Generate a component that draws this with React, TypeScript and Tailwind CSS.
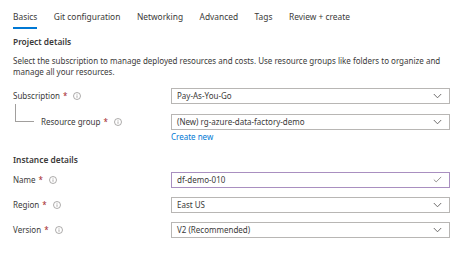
import { ReactNode } from "react";

const tabs = ["Basics", "Git configuration", "Networking", "Advanced", "Tags", "Review + create"];

function Info() {
  return (
    <svg width="8" height="8" viewBox="0 0 8 8" className="ml-[6px] shrink-0">
      <circle cx="4" cy="4" r="3.5" fill="none" stroke="#8a8886" strokeWidth="0.7" />
      <line x1="4" y1="3.4" x2="4" y2="5.8" stroke="#8a8886" strokeWidth="0.7" />
      <circle cx="4" cy="2.3" r="0.45" fill="#8a8886" />
    </svg>
  );
}

function Chevron() {
  return (
    <svg width="9" height="6" viewBox="0 0 9 6">
      <path d="M0.8 1 L4.5 4.8 L8.2 1" fill="none" stroke="#605e5c" strokeWidth="0.9" />
    </svg>
  );
}

function Check() {
  return (
    <svg width="9" height="7" viewBox="0 0 9 7">
      <path d="M0.8 3.6 L3.2 5.9 L8.2 0.9" fill="none" stroke="#8a8886" strokeWidth="0.9" />
    </svg>
  );
}

function Label({ children }: { children: ReactNode }) {
  return (
    <span className="flex items-center">
      {children}
      <span className="ml-[3px] text-[#a4262c]">*</span>
      <Info />
    </span>
  );
}

function Field({ value, valid }: { value: string; valid?: boolean }) {
  return (
    <div
      className={`flex h-[16px] w-[279px] items-center justify-between border px-[5px] ${
        valid ? "border-[#a98fc0]" : "border-[#b8b6b4]"
      }`}
    >
      <span>{value}</span>
      <span className="pr-[2px]">{valid ? <Check /> : <Chevron />}</span>
    </div>
  );
}

export default function App() {
  return (
    <div className="h-[253px] w-[474px] overflow-hidden bg-white text-[8px] leading-none text-[#3b3a39] [font-family:'Noto_Sans',sans-serif]">
      <div className="flex gap-[16.5px] px-[13px] pt-[13px] text-[8.4px]">
        {tabs.map((t, i) => (
          <div key={t} className="flex flex-col">
            <span className="h-[12px]">{t}</span>
            <span className={`mt-[2px] h-[2px] ${i === 0 ? "bg-[#0078d4]" : ""}`} />
          </div>
        ))}
      </div>

      <div className="px-[13px]">
        <h2 className="mt-[9px] text-[8.4px] font-semibold">Project details</h2>
        <p className="mt-[9px] w-[445px] leading-[11px]">
          Select the subscription to manage deployed resources and costs. Use resource groups like folders to organize
          and manage all your resources.
        </p>

        <div className="mt-[11px] flex items-center justify-between pr-[11px]">
          <Label>Subscription</Label>
          <Field value="Pay-As-You-Go" />
        </div>
        <div className="mt-[10px] flex items-start justify-between pr-[11px]">
          <div className="flex items-start">
            <span className="-mt-[10px] ml-[2px] h-[18px] w-[19px] border-b border-l border-[#a19f9d]" />
            <span className="ml-[7px] mt-[4px]">
              <Label>Resource group</Label>
            </span>
          </div>
          <div>
            <Field value="(New) rg-azure-data-factory-demo" />
            <div className="mt-[3px] text-[#0078d4]">Create new</div>
          </div>
        </div>

        <h2 className="mt-[15px] text-[8.4px] font-semibold">Instance details</h2>

        <div className="mt-[7px] flex flex-col gap-[9px] pr-[11px]">
          <div className="flex items-center justify-between">
            <Label>Name</Label>
            <Field value="df-demo-010" valid />
          </div>
          <div className="flex items-center justify-between">
            <Label>Region</Label>
            <Field value="East US" />
          </div>
          <div className="flex items-center justify-between">
            <Label>Version</Label>
            <Field value="V2 (Recommended)" />
          </div>
        </div>
      </div>
    </div>
  );
}
